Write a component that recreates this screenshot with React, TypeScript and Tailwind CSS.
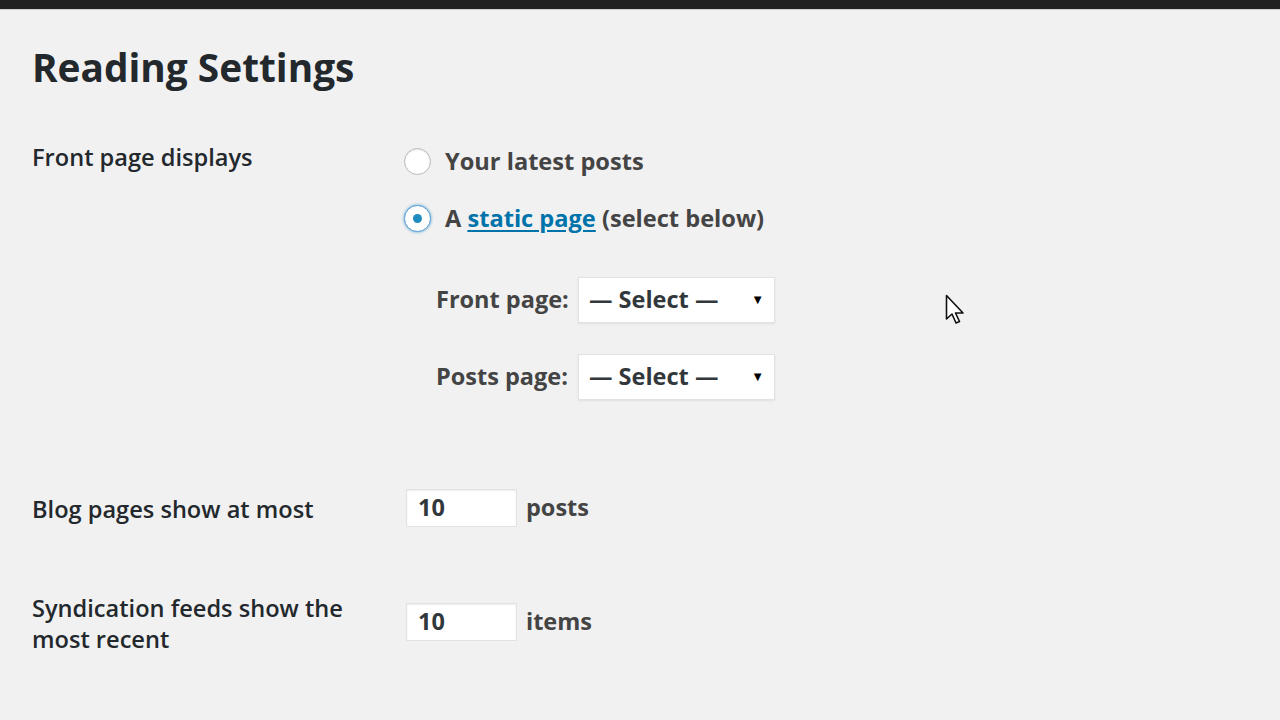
import React from "react";

function Radio({ checked }: { checked?: boolean }) {
  return (
    <span
      className={
        "relative inline-flex w-[27px] h-[27px] rounded-full bg-white items-center justify-center border shrink-0 " +
        (checked
          ? "border-[#5b9dd9] shadow-[0_0_3px_rgba(30,140,190,0.8)]"
          : "border-[#b4b9be] shadow-[inset_0_1px_2px_rgba(0,0,0,0.1)]")
      }
    >
      {checked && <span className="w-[9px] h-[9px] rounded-full bg-[#1e8cbe]" />}
    </span>
  );
}

function Select() {
  return (
    <div className="w-[197px] h-[46px] bg-white border border-[#e2e2e2] shadow-[0_1px_2px_rgba(0,0,0,0.07)] flex items-center pl-[10px] pr-[10px] justify-between">
      <span className="text-[23.5px] font-bold text-[#32373c]">— Select —</span>
      <span className="text-[13px] text-black">▼</span>
    </div>
  );
}

function NumInput() {
  return (
    <div className="w-[111px] h-[38px] bg-white border border-[#e2e2e2] shadow-[inset_0_1px_2px_rgba(0,0,0,0.07)] flex items-center pl-[11px]">
      <span className="text-[23.5px] font-bold text-[#32373c]">10</span>
    </div>
  );
}

export default function App() {
  return (
    <div
      className="relative min-h-[720px] bg-[#f1f1f1] overflow-hidden"
      style={{ fontFamily: '"Open Sans", "Noto Sans", sans-serif' }}
    >
      <div className="h-[9px] bg-[#222]" />
      <div className="h-px bg-[#d0d0d0]" />
      <div className="px-[32px]">
        <h1 className="mt-[33px] text-[38.8px] leading-[48px] font-bold text-[#23282d]">
          Reading Settings
        </h1>

        {/* Row 1 */}
        <div className="flex mt-[51px]">
          <div className="w-[372px] text-[23.6px] leading-[31px] font-semibold text-[#23282d]">
            Front page displays
          </div>
          <div className="pt-[4px]">
            <div className="flex items-center h-[31px]">
              <Radio />
              <span className="ml-[14px] text-[23.6px] font-bold text-[#444]">
                Your latest posts
              </span>
            </div>
            <div className="flex items-center h-[31px] mt-[26px]">
              <Radio checked />
              <span className="ml-[14px] text-[23.6px] font-bold text-[#444]">
                A{" "}
                <span className="text-[#0073aa] underline underline-offset-[3px]">static page</span>{" "}
                (select below)
              </span>
            </div>
            <div className="ml-[32px] mt-[43px] flex flex-col gap-[31px]">
              <div className="flex items-center">
                <span className="w-[142px] text-[23.5px] font-bold text-[#444]">Front page:</span>
                <Select />
              </div>
              <div className="flex items-center">
                <span className="w-[142px] text-[23.5px] font-bold text-[#444]">Posts page:</span>
                <Select />
              </div>
            </div>
          </div>
        </div>

        {/* Row 2 */}
        <div className="flex items-center mt-[89px]">
          <div className="w-[374px] text-[23.6px] leading-[31px] font-semibold text-[#23282d] pt-[3px]">
            Blog pages show at most
          </div>
          <NumInput />
          <span className="ml-[9px] text-[23.5px] font-bold text-[#444]">posts</span>
        </div>

        {/* Row 3 */}
        <div className="flex items-start mt-[66px]">
          <div className="w-[374px] text-[23.6px] leading-[31px] font-semibold text-[#23282d]">
            Syndication feeds show the
            <br />
            most recent
          </div>
          <div className="flex items-center mt-[10px]">
            <NumInput />
            <span className="ml-[9px] text-[23.5px] font-bold text-[#444]">items</span>
          </div>
        </div>
      </div>

      {/* mouse cursor */}
      <svg
        className="absolute left-[945px] top-[294px]"
        width="24"
        height="34"
        viewBox="0 0 24 34"
      >
        <path
          d="M1.5 1.5 L1.5 25 L7 20 L11 29 L14.5 27.5 L10.5 19 L18 19 Z"
          fill="white"
          stroke="#111"
          strokeWidth="1.6"
          strokeLinejoin="round"
        />
      </svg>
    </div>
  );
}
